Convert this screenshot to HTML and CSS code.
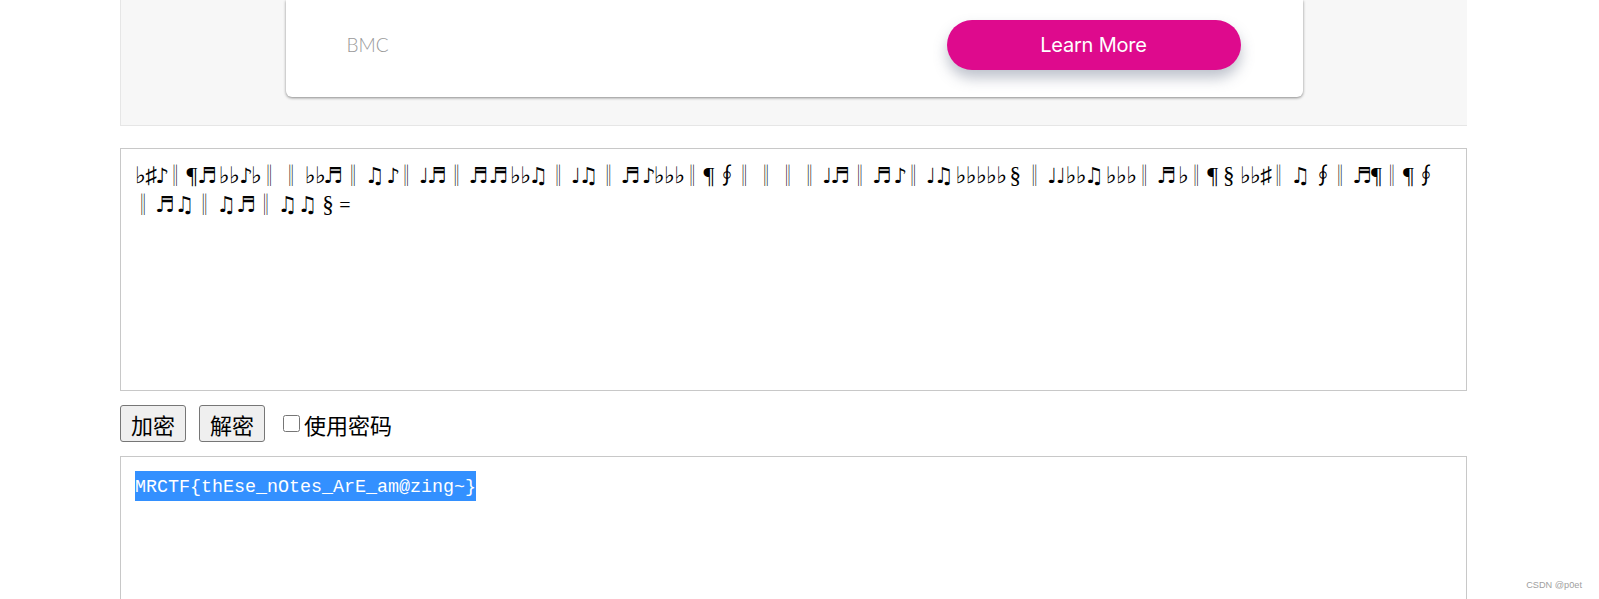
FILE: index.html
```html
<!DOCTYPE html>
<html lang="zh-CN">
<head>
    <meta charset="UTF-8">
    <meta name="viewport" content="width=device-width, initial-scale=1.0">
    <title>MRCTF</title>
    <link rel="stylesheet" href="styles.css">
</head>
<body>
    <div class="page">
        <!-- Ad banner, scrolled partly out of view -->
        <div class="ad-box">
            <div class="ad-card">
                <span class="ad-name">BMC</span>
                <a href="#" class="ad-btn">Learn More</a>
            </div>
        </div>

        <!-- Cipher text: every glyph has its own cell, the symbols differ in width -->
        <div class="text-box cipher">
            <div class="line">
                <span class="flat">♭</span><span class="flat">♯</span><span class="ei">♪</span><span class="bar">‖</span>
                <span class="pa">¶</span><span class="bm">♬</span><span class="flat">♭</span><span class="flat">♭</span><span class="ei">♪</span><span class="flat">♭</span><span class="bar">‖</span><span class="bar">‖</span>
                <span class="flat">♭</span><span class="flat">♭</span><span class="bm">♬</span><span class="bar">‖</span>
                <span class="bm">♫</span><span class="ei">♪</span><span class="bar">‖</span>
                <span class="qu">♩</span><span class="bm">♬</span><span class="bar">‖</span>
                <span class="bm">♬</span><span class="bm">♬</span><span class="flat">♭</span><span class="flat">♭</span><span class="bm">♫</span><span class="bar">‖</span>
                <span class="qu">♩</span><span class="bm">♫</span><span class="bar">‖</span>
                <span class="bm">♬</span><span class="ei">♪</span><span class="flat">♭</span><span class="flat">♭</span><span class="flat">♭</span><span class="bar">‖</span>
                <span class="pa">¶</span><span class="in">∮</span><span class="bar">‖</span><span class="bar">‖</span><span class="bar">‖</span><span class="bar">‖</span>
                <span class="qu">♩</span><span class="bm">♬</span><span class="bar">‖</span>
                <span class="bm">♬</span><span class="ei">♪</span><span class="bar">‖</span>
                <span class="qu">♩</span><span class="bm">♫</span><span class="flat">♭</span><span class="flat">♭</span><span class="flat">♭</span><span class="flat">♭</span><span class="flat">♭</span><span class="se">§</span><span class="bar">‖</span>
                <span class="qu">♩</span><span class="qu">♩</span><span class="flat">♭</span><span class="flat">♭</span><span class="bm">♫</span><span class="flat">♭</span><span class="flat">♭</span><span class="flat">♭</span><span class="bar">‖</span>
                <span class="bm">♬</span><span class="flat">♭</span><span class="bar">‖</span>
                <span class="pa">¶</span><span class="se">§</span><span class="flat">♭</span><span class="flat">♭</span><span class="flat">♯</span><span class="bar">‖</span>
                <span class="bm">♫</span><span class="in">∮</span><span class="bar">‖</span>
                <span class="bm">♬</span><span class="pa">¶</span><span class="bar">‖</span>
                <span class="pa">¶</span><span class="in">∮</span>
            </div>
            <div class="line">
                <span class="bar">‖</span><span class="bm">♬</span><span class="bm">♫</span><span class="bar">‖</span>
                <span class="bm">♫</span><span class="bm">♬</span><span class="bar">‖</span>
                <span class="bm">♫</span><span class="bm">♫</span><span class="se">§</span><span class="eq">=</span>
            </div>
        </div>

        <div class="controls">
            <button class="btn">加密</button>
            <button class="btn">解密</button>
            <label class="use-pwd"><input type="checkbox" class="check">使用密码</label>
        </div>

        <!-- Plain text -->
        <div class="text-box plain"><span class="selected">MRCTF{thEse_nOtes_ArE_am@zing~}</span></div>
    </div>

    <div class="watermark">CSDN @p0et</div>
</body>
</html>
```

FILE: styles.css
```css
html, body {
    height: 599px;
    overflow: hidden;
}

body {
    margin: 0;
    background-color: #fff;
    font-family: "Liberation Sans", "Noto Sans CJK SC", sans-serif;
}

.page {
    width: 1347px;
    margin-left: 120px;
}

.ad-box {
    height: 125px;
    background-color: #f7f7f7;
    border-bottom: 1px solid #e6e6e6;
    border-left: 1px solid #e6e6e6;
    display: flex;
    justify-content: center;
}

.ad-card {
    width: 1017px;
    height: 97px;
    background-color: #fff;
    border-radius: 0 0 6px 6px;
    box-shadow: 0 1px 3px rgba(0, 0, 0, 0.45);
    display: flex;
    justify-content: space-between;
    align-items: center;
    padding: 0 62px 8px 61px;
    box-sizing: border-box;
}

.ad-name {
    font-family: Lato, sans-serif;
    font-size: 19px;
    font-weight: 300;
    color: #999;
}

.ad-btn {
    width: 294px;
    height: 50px;
    line-height: 50px;
    background-color: #de0a8d;
    border-radius: 25px;
    box-shadow: 0 8px 14px rgba(70, 80, 110, 0.35);
    color: #fff;
    font-family: Inter, sans-serif;
    font-size: 20px;
    letter-spacing: -0.2px;
    text-align: center;
    text-decoration: none;
}

.text-box {
    border: 1px solid #c8c8c8;
    box-sizing: border-box;
    padding: 14px;
    color: #000;
}

.cipher {
    height: 243px;
    margin-top: 22px;
    padding-top: 11px;
    font-family: "Liberation Serif", "DejaVu Serif", serif;
    font-size: 20px;
    line-height: 30px;
}

.line {
    display: flex;
    align-items: baseline;
    height: 30px;
    white-space: nowrap;
}

.line span {
    flex: none;
    display: block;
}

/* glyph cells */
.flat { width: 10.2px; font-size: 23px; }
.ei { width: 11.8px; font-family: "DejaVu Sans", sans-serif; font-size: 21px; }
.qu { width: 9.7px; margin-left: -1px; font-family: "DejaVu Sans", sans-serif; font-size: 21px; }
.bm { width: 21.8px; margin-left: -2px; font-family: "DejaVu Sans", sans-serif; font-size: 22px; }
.bar { width: 21.8px; font-family: "Noto Sans CJK SC", sans-serif; font-size: 16px; transform: translateY(-2px) scaleY(1.35); }
.pa { width: 9.6px; margin-left: -2.6px; padding-right: 3px; font-size: 24px; }
.se { width: 20px; padding-left: 3px; box-sizing: border-box; font-size: 23px; }
.in { width: 20px; font-size: 22px; }
.eq { width: 11px; }

.controls {
    display: flex;
    align-items: center;
    height: 37px;
    margin: 14px 0;
}

.btn {
    width: 66px;
    height: 37px;
    margin-right: 13px;
    padding: 0;
    font-family: "Noto Sans CJK SC", sans-serif;
    font-size: 22px;
    background-color: #efefef;
    border: 1px solid #767676;
    border-radius: 3px;
    color: #000;
}

.use-pwd {
    display: flex;
    align-items: center;
    font-family: "Noto Sans CJK SC", sans-serif;
    font-size: 22px;
}

.check {
    width: 17px;
    height: 17px;
    margin: 0 4px 0 5px;
}

.plain {
    height: 243px;
    font-family: "Liberation Mono", monospace;
    font-size: 18.33px;
}

.selected {
    display: inline-block;
    height: 30px;
    line-height: 33px;
    background-color: #3390ff;
    color: #fff;
}

.watermark {
    position: absolute;
    right: 17px;
    bottom: 9px;
    font-size: 9.2px;
    color: #a0a0a0;
}
```
